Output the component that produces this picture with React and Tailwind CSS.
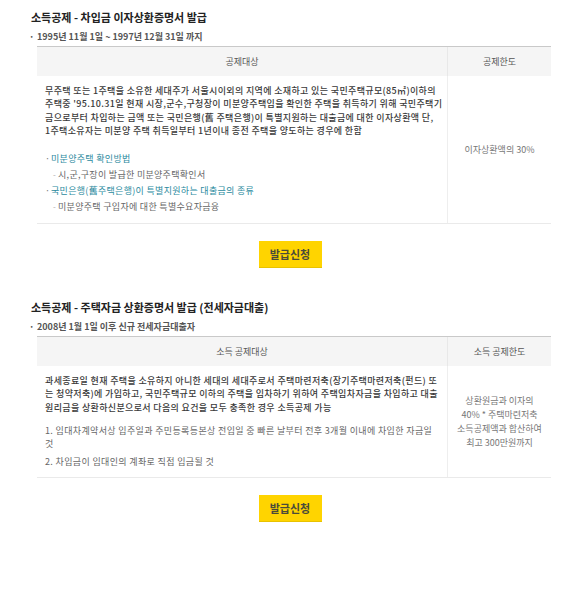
const SECTIONS = [
  {
    title: '소득공제 - 차입금 이자상환증명서 발급',
    period: '1995년 11월 1일 ~ 1997년 12월 31일 까지',
    headLeft: '공제대상',
    headRight: '공제한도',
    lines: [
      '무주택 또는 1주택을 소유한 세대주가 서울시이외의 지역에 소재하고 있는 국민주택규모(85㎡)이하의',
      "주택중 '95.10.31일 현재 시장,군수,구청장이 미분양주택임을 확인한 주택을 취득하기 위해 국민주택기",
      '금으로부터 차입하는 금액 또는 국민은행(舊 주택은행)이 특별지원하는 대출금에 대한 이자상환액 단,',
      '1주택소유자는 미분양 주택 취득일부터 1년이내 종전 주택을 양도하는 경우에 한함',
    ],
    limit: ['이자상환액의 30%'],
  },
  {
    title: '소득공제 - 주택자금 상환증명서 발급 (전세자금대출)',
    period: '2008년 1월 1일 이후 신규 전세자금대출자',
    headLeft: '소득 공제대상',
    headRight: '소득 공제한도',
    lines: [
      '과세종료일 현재 주택을 소유하지 아니한 세대의 세대주로서 주택마련저축(장기주택마련저축(펀드) 또',
      '는 청약저축)에 가입하고, 국민주택규모 이하의 주택을 임차하기 위하여 주택임차자금을 차입하고 대출',
      '원리금을 상환하신분으로서 다음의 요건을 모두 충족한 경우 소득공제 가능',
    ],
    limit: ['상환원금과 이자의', '40% * 주택마련저축', '소득공제액과 합산하여', '최고 300만원까지'],
  },
];

function Bullet({ children }) {
  return (
    <div className="flex h-[16px] items-center whitespace-nowrap text-[#2b8a9e]">
      <span className="w-[6px] text-[#777]">·</span>
      <span>{children}</span>
    </div>
  );
}

function SubItem({ children }) {
  return (
    <div className="flex h-[16px] items-center whitespace-nowrap pl-[8px] text-[#666]">
      <span className="w-[5px] text-[8px] text-[#aaa]">-</span>
      <span>{children}</span>
    </div>
  );
}

function FirstExtra() {
  return (
    <div className="mt-[13px] tracking-[0.3px]">
      <Bullet>미분양주택 확인방법</Bullet>
      <SubItem>시,군,구장이 발급한 미분양주택확인서</SubItem>
      <Bullet>국민은행(舊주택은행)이 특별지원하는 대출금의 종류</Bullet>
      <SubItem>미분양주택 구입자에 대한 특별수요자금융</SubItem>
    </div>
  );
}

function SecondExtra() {
  return (
    <div className="mt-[10px] tracking-[0.35px] text-[#666]">
      <p className="whitespace-nowrap">1. 임대차계약서상 입주일과 주민등록등본상 전입일 중 빠른 날부터 전후 3개월 이내에 차입한 자금일</p>
      <p>것</p>
      <p className="mt-[4px] whitespace-nowrap">2. 차입금이 임대인의 계좌로 직접 입금될 것</p>
    </div>
  );
}

function Section({ data, extra, top }) {
  return (
    <section className={top}>
      <h2 className="pl-[31px] text-[11px] leading-[14px] font-bold text-[#222]">{data.title}</h2>
      <p className="mt-[7px] flex pl-[29px] text-[9px] leading-[12px] font-semibold text-[#555]">
        <span className="w-[8px]">·</span>
        {data.period}
      </p>

      <div className="ml-[37px] mt-[3px] w-[514px] border-t border-[#c9c9c9] text-[9px] leading-[13.3px]">
        <div className="flex h-[29px] items-center bg-[#f5f5f5] text-[#555]">
          <div className="flex h-full w-[411px] items-center justify-center border-r border-[#e8e8e8]">{data.headLeft}</div>
          <div className="flex-1 text-center">{data.headRight}</div>
        </div>
        <div className="flex border-b border-[#eaeaea]">
          <div className="w-[411px] border-r border-[#eeeeee] px-[8px] pt-[8px] pb-[9px]">
            <div className="font-medium tracking-[0.35px] text-[#3a3a3a]">
              {data.lines.map((l) => (
                <p key={l} className="whitespace-nowrap">{l}</p>
              ))}
            </div>
            {extra}
          </div>
          <div className="flex flex-1 flex-col items-center justify-center text-center leading-[14px] text-[#777]">
            {data.limit.map((l) => (
              <p key={l}>{l}</p>
            ))}
          </div>
        </div>
      </div>

      <div className="mt-[17px] flex justify-center">
        <button className="h-[27px] w-[63px] border-b border-[#e8c200] bg-[#ffd400] text-[11px] font-bold text-[#4a4a3a]">
          발급신청
        </button>
      </div>
    </section>
  );
}

export default function App() {
  return (
    <div className="min-h-[597px] w-[580px] bg-white font-['Noto_Sans_CJK_KR','Noto_Sans',sans-serif]">
      <Section data={SECTIONS[0]} extra={<FirstExtra />} top="pt-[10px]" />
      <Section data={SECTIONS[1]} extra={<SecondExtra />} top="pt-[32px]" />
    </div>
  );
}
